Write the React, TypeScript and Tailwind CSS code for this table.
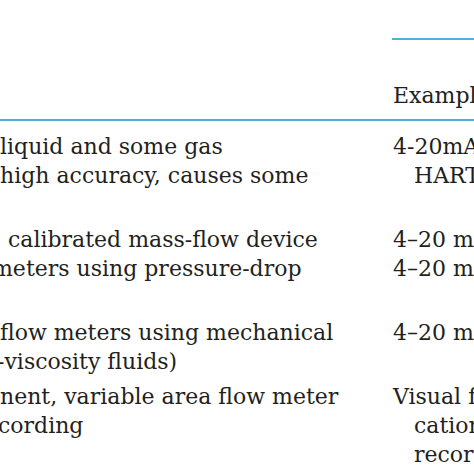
const rows: { left: { text: string; ml: string }[]; right: { text: string; indent?: boolean }[]; pad: string }[] = [
  {
    left: [
      { text: "liquid and some gas", ml: "ml-0" },
      { text: "high accuracy, causes some", ml: "ml-0" },
    ],
    right: [{ text: "4-20mA," }, { text: "HART", indent: true }],
    pad: "pt-[11px] pb-[35px]",
  },
  {
    left: [{ text: "calibrated mass-flow device", ml: "ml-[8px]" }],
    right: [{ text: "4–20 mA" }],
    pad: "",
  },
  {
    left: [{ text: "meters using pressure-drop", ml: "-ml-[8px]" }],
    right: [{ text: "4–20 mA" }],
    pad: "pb-[35px]",
  },
  {
    left: [
      { text: "flow meters using mechanical", ml: "ml-0" },
      { text: "-viscosity fluids)", ml: "-ml-[3px]" },
    ],
    right: [{ text: "4–20 mA" }],
    pad: "pb-[6px]",
  },
  {
    left: [
      { text: "nent, variable area flow meter", ml: "ml-0" },
      { text: "cording", ml: "-ml-[2px]" },
    ],
    right: [
      { text: "Visual flow indi-" },
      { text: "cation,", indent: true },
      { text: "recording", indent: true },
    ],
    pad: "",
  },
];

export default function App() {
  return (
    <div
      className="h-[474px] w-[474px] overflow-hidden bg-white text-[22px] leading-[29px] text-[#231f20]"
      style={{ fontFamily: '"DejaVu Serif", serif' }}
    >
      <div className="h-[38px]" />
      <div className="grid grid-cols-[392px_1fr]">
        <div />
        <div className="h-[2px] bg-[#4eb0d8]" />
      </div>
      <div className="grid grid-cols-[392px_1fr] pt-[41px] pb-[9px]">
        <div />
        <div className="whitespace-nowrap pl-[1px]">Example</div>
      </div>
      <div className="h-[2px] bg-[#4eb0d8]" />
      {rows.map((row, i) => (
        <div key={i} className={`grid grid-cols-[392px_1fr] ${row.pad}`}>
          <div className="overflow-hidden">
            {row.left.map((l, j) => (
              <div key={j} className={`whitespace-nowrap ${l.ml}`}>
                {l.text}
              </div>
            ))}
          </div>
          <div className="pl-[1px]">
            {row.right.map((r, j) => (
              <div key={j} className={`whitespace-nowrap ${r.indent ? "pl-[21px]" : ""}`}>
                {r.text}
              </div>
            ))}
          </div>
        </div>
      ))}
    </div>
  );
}
